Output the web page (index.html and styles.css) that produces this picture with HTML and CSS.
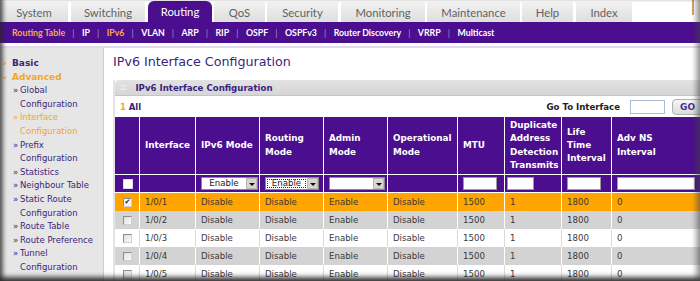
FILE: index.html
```html
<!DOCTYPE html>
<html>
<head>
<meta charset="utf-8">
<title>IPv6 Interface Configuration</title>
<link rel="stylesheet" href="styles.css">
</head>
<body>
<div class="page">
  <nav class="tabs">
    <div class="tab t1">System</div>
    <div class="tab t2">Switching</div>
    <div class="tab t3 active">Routing</div>
    <div class="tab t4">QoS</div>
    <div class="tab t5">Security</div>
    <div class="tab t6">Monitoring</div>
    <div class="tab t7">Maintenance</div>
    <div class="tab t8">Help</div>
    <div class="tab t9">Index</div>
    <div class="logo-edge"></div>
  </nav>
  <nav class="subnav">
    <span class="sub on">Routing Table</span><span class="bar">|</span>
    <span class="sub">IP</span><span class="bar">|</span>
    <span class="sub on">IPv6</span><span class="bar">|</span>
    <span class="sub">VLAN</span><span class="bar">|</span>
    <span class="sub">ARP</span><span class="bar">|</span>
    <span class="sub">RIP</span><span class="bar">|</span>
    <span class="sub">OSPF</span><span class="bar">|</span>
    <span class="sub">OSPFv3</span><span class="bar">|</span>
    <span class="sub">Router Discovery</span><span class="bar">|</span>
    <span class="sub">VRRP</span><span class="bar">|</span>
    <span class="sub">Multicast</span>
  </nav>
  <div class="rule"></div>
  <div class="main">
    <aside class="side">
      <div class="grp"><span class="arr">›</span>Basic</div>
      <div class="grp open"><span class="arr down">›</span>Advanced</div>
      <div class="item"><span class="rq">»</span>Global Configuration</div>
      <div class="item cur"><span class="rq">»</span>Interface Configuration</div>
      <div class="item"><span class="rq">»</span>Prefix Configuration</div>
      <div class="item"><span class="rq">»</span>Statistics</div>
      <div class="item"><span class="rq">»</span>Neighbour Table</div>
      <div class="item"><span class="rq">»</span>Static Route Configuration</div>
      <div class="item"><span class="rq">»</span>Route Table</div>
      <div class="item"><span class="rq">»</span>Route Preference</div>
      <div class="item"><span class="rq">»</span>Tunnel Configuration</div>
    </aside>
    <section class="content">
      <h1 class="title">IPv6 Interface Configuration</h1>
      <div class="box">
        <div class="box-head"><span class="grip">::</span>IPv6 Interface Configuration</div>
        <div class="toolbar">
          <span class="count"><span class="num">1</span> <b>All</b></span>
          <span class="goto"><b>Go To Interface</b><span class="field"></span><span class="btn">GO</span></span>
        </div>
        <table class="grid">
          <colgroup>
            <col class="c1"><col class="c2"><col class="c3"><col class="c4"><col class="c5">
            <col class="c6"><col class="c7"><col class="c8"><col class="c9"><col class="c10">
          </colgroup>
          <thead>
            <tr class="hrow">
              <th></th>
              <th>Interface</th>
              <th>IPv6 Mode</th>
              <th>Routing<br>Mode</th>
              <th>Admin<br>Mode</th>
              <th>Operational<br>Mode</th>
              <th>MTU</th>
              <th>Duplicate<br>Address<br>Detection<br>Transmits</th>
              <th>Life<br>Time<br>Interval</th>
              <th>Adv NS<br>Interval</th>
            </tr>
            <tr class="frow">
              <td class="cbc"><span class="cb white"></span></td>
              <td></td>
              <td class="p5"><span class="sel w57"><span class="sv">Enable</span><span class="sa"></span></span></td>
              <td class="p5"><span class="sel w54"><span class="sv focus">Enable</span><span class="sa"></span></span></td>
              <td class="p5"><span class="sel w56"><span class="sv"></span><span class="sa"></span></span></td>
              <td></td>
              <td class="p5"><span class="inp w34"></span></td>
              <td class="p2"><span class="inp w27"></span></td>
              <td class="p5"><span class="inp w34"></span></td>
              <td class="p5"><span class="inp w78"></span></td>
            </tr>
          </thead>
          <tbody>
            <tr class="sel-row">
              <td class="cbc"><span class="cb checked">✔</span></td>
              <td>1/0/1</td><td>Disable</td><td>Disable</td><td>Enable</td><td>Disable</td><td>1500</td><td>1</td><td>1800</td><td>0</td>
            </tr>
            <tr class="odd">
              <td class="cbc"><span class="cb"></span></td>
              <td>1/0/2</td><td>Disable</td><td>Disable</td><td>Enable</td><td>Disable</td><td>1500</td><td>1</td><td>1800</td><td>0</td>
            </tr>
            <tr class="even">
              <td class="cbc"><span class="cb"></span></td>
              <td>1/0/3</td><td>Disable</td><td>Disable</td><td>Enable</td><td>Disable</td><td>1500</td><td>1</td><td>1800</td><td>0</td>
            </tr>
            <tr class="odd">
              <td class="cbc"><span class="cb"></span></td>
              <td>1/0/4</td><td>Disable</td><td>Disable</td><td>Enable</td><td>Disable</td><td>1500</td><td>1</td><td>1800</td><td>0</td>
            </tr>
            <tr class="even">
              <td class="cbc"><span class="cb"></span></td>
              <td>1/0/5</td><td>Disable</td><td>Disable</td><td>Enable</td><td>Disable</td><td>1500</td><td>1</td><td>1800</td><td>0</td>
            </tr>
          </tbody>
        </table>
      </div>
    </section>
  </div>
  <div class="frame"></div>
</div>
</body>
</html>
```

FILE: styles.css
```css
* { box-sizing: border-box; margin: 0; padding: 0; }
html, body { width: 700px; height: 281px; overflow: hidden; background: #fff; }
body { font-family: "DejaVu Sans", Verdana, sans-serif; }
.page { position: relative; width: 700px; height: 281px; overflow: hidden; background: #fff; }

/* top tabs */
.tabs { display: flex; align-items: flex-end; height: 22px; }
.tab {
  height: 20px; margin-right: 3px;
  background: linear-gradient(#f1f1f1, #dedede);
  color: #626262; font: 11.3px Lato, "Open Sans", sans-serif;
  display: flex; align-items: center; justify-content: center;
}
.tab.active { height: 21px; background: #4b0e8e; color: #fff; border-radius: 6px 6px 0 0; }
.t1 { width: 68px; }
.t2 { width: 74px; }
.t3 { width: 64px; margin-right: 2px; }
.t4 { width: 51px; margin-right: 2px; }
.t5 { width: 71px; }
.t6 { width: 84px; margin-right: 2px; }
.t7 { width: 93px; margin-right: 2px; }
.t8 { width: 51px; }
.t9 { width: 56px; }
.logo-edge { margin-left: auto; margin-right: 6px; align-self: flex-start; width: 2px; height: 15px; background: #d6a266; }

/* sub nav */
.subnav {
  height: 21px; background: #4b0e8e; display: flex; align-items: center;
  padding-left: 12px; color: #fff; font: bold 8.8px Lato, "Open Sans", sans-serif;
}
.sub.on { color: #f6a94e; }
.bar { color: #a995cf; font-weight: normal; margin: 0 7.5px 0 7px; }

.rule { height: 5px; border-bottom: 2px solid #e3d9ee; }

/* layout */
.main { display: flex; height: 233px; }
.side {
  width: 104px; flex: none; background: #e6e6e6; border-right: 1px solid #cdcdcd;
  padding-top: 9px; font-size: 8.5px; line-height: 13.6px; color: #3b2677;
}
.grp { font-weight: bold; font-size: 9px; padding-left: 12px; position: relative; }
.grp.open { color: #f5a623; }
.arr { position: absolute; left: 3px; top: 0; color: #f5a623; font-weight: bold; }
.arr.down { transform: rotate(90deg); left: 2px; }
.item { padding-left: 20px; }
.item .rq { display: inline-block; width: 7px; margin-left: -7px; }
.item.cur { color: #f5a623; }

.content { flex: 1; min-width: 0; padding-left: 9px; }
.title { font-weight: normal; font-size: 12.7px; line-height: 16px; color: #3a1f7d; margin-top: 6px; }

.box { margin-top: 10px; width: 600px; border-left: 2px solid #e4e4e4; }
.box-head {
  height: 16px; background: linear-gradient(#e2e2e2, #d6d6d6); border-bottom: 1px solid #c4c4c4;
  border-radius: 4px 0 0 0; display: flex; align-items: center;
  font-weight: bold; font-size: 8.6px; color: #3a1f7d; padding-left: 5px;
}
.grip { color: #f4f4f4; font-weight: bold; margin-right: 9px; font-size: 8px; }
.toolbar { height: 21px; display: flex; align-items: center; padding: 0 9px 0 5px; font-size: 8.6px; }
.count b { color: #3a1f7d; }
.num { color: #f5a623; font-weight: bold; }
.goto { margin-left: auto; display: flex; align-items: center; color: #222; }
.field { width: 35px; height: 14px; border: 1px solid #a9bcd4; background: #fff; margin-left: 10px; }
.btn {
  margin-left: 7px; width: 32px; height: 16px; border: 1px solid #b0b0b0; border-radius: 4px;
  background: linear-gradient(#f7f7f7, #dcdcdc); color: #4b2a92; font-weight: bold;
  display: flex; align-items: center; padding-left: 7px; font-size: 9px;
}

/* table */
.grid { border-collapse: separate; border-spacing: 0; table-layout: fixed; width: 598px; font-size: 8.6px; color: #383838; }
.c1 { width: 24px; } .c2 { width: 56px; } .c3 { width: 64px; } .c4 { width: 64px; } .c5 { width: 64px; }
.c6 { width: 70px; } .c7 { width: 47px; } .c8 { width: 57px; } .c9 { width: 50px; } .c10 { width: 102px; }
.grid th, .grid td { border-left: 1px solid #fff; padding-left: 5px; white-space: nowrap; overflow: hidden; text-align: left; }
.grid th:first-child, .grid td:first-child { border-left: 0; }
.hrow th {
  height: 58px; background: #4b0e8e; color: #fff; font-weight: bold; font-size: 8.8px;
  line-height: 13.2px; vertical-align: middle; border-bottom: 1px solid #fff;
}
.frow td { height: 18px; background: #4b0e8e; border-bottom: 1px solid #fff; vertical-align: middle; line-height: 0; }
.grid td.p5 { padding-left: 5px; }
.grid td.p2 { padding-left: 2px; }
.grid td.cbc { padding-left: 8px; }
tbody td { height: 18px; vertical-align: middle; }
.sel-row td { background: #ffa400; }
.odd td { background: #d3d3d3; }
.even td { background: #fff; border-left-color: #dadada; }
.even td:first-child { border-left: 0; }

.cb {
  display: inline-block; width: 9px; height: 9px; vertical-align: middle;
  border: 1px solid #8d8d8d; border-right-color: #d0d0d0; border-bottom-color: #d0d0d0;
  background: linear-gradient(135deg, #e0e0e0, #fafafa); font-size: 7px; line-height: 7px; color: #222; text-align: center;
}
.cb.white { width: 10px; height: 10px; background: #fff; border: 1px solid #ddd; }
.cb.checked { background: #f4f4f4; }

.sel {
  display: inline-flex; height: 13px; background: #fff; border: 1px solid #8a8a8a; vertical-align: middle;
  line-height: 11px; font-size: 8.6px; color: #222;
}
.w57 { width: 57px; } .w54 { width: 54px; } .w56 { width: 56px; }
.sv { flex: 1; text-align: center; }
.sv.focus { outline: 1px dotted #333; outline-offset: -1px; margin: 1px; line-height: 9px; }
.sa { width: 11px; background: #d9d6d0; border: 1px solid #b8b8b8; position: relative; }
.sa::after {
  content: ""; position: absolute; left: 2px; top: 4px;
  border-left: 3px solid transparent; border-right: 3px solid transparent; border-top: 3px solid #111;
}
.inp { display: inline-block; height: 13px; background: #fff; border: 1px solid #9a9a9a; vertical-align: middle; }
.w34 { width: 34px; } .w27 { width: 27px; } .w78 { width: 78px; }

.frame {
  position: absolute; inset: 0; pointer-events: none;
  box-shadow: inset 5px 0 4px -2px rgba(40,40,40,.75), inset -7px 0 5px -3px rgba(70,70,70,.5), inset 0 -7px 5px -3px rgba(30,30,30,.85);
}
```
